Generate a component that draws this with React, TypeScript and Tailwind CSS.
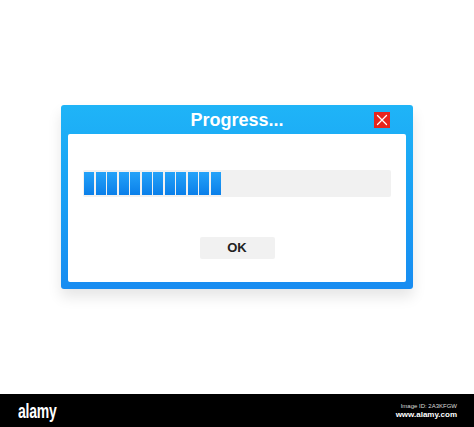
const SEGMENTS = 12;

function CloseButton() {
  return (
    <button className="absolute right-[16px] top-[7px] flex h-[16px] w-[16px] items-center justify-center bg-[#e8241c]">
      <svg width="12" height="12" viewBox="0 0 12 12" fill="none">
        <path d="M1.5 1.5 L10.5 10.5 M10.5 1.5 L1.5 10.5" stroke="white" strokeWidth="1.3" strokeLinecap="round" />
      </svg>
    </button>
  );
}

function ProgressBar({ filled }: { filled: number }) {
  return (
    <div className="mx-[15px] flex h-[27px] items-center gap-[1.5px] rounded-[2px] bg-[#f1f1f1] pl-[1px]">
      {Array.from({ length: SEGMENTS }).map((_, i) =>
        i < filled ? (
          <div
            key={i}
            className="h-[23px] w-[10px] bg-gradient-to-b from-[#24a2f9] to-[#0a7fe9]"
          />
        ) : null
      )}
    </div>
  );
}

export default function App() {
  return (
    <div className="flex h-[427px] w-[474px] flex-col bg-white font-['Liberation_Sans',Arial,sans-serif]">
      <div className="flex-1 pl-[61px] pt-[105px]">
        {/* Dialog window */}
        <div className="w-[352px] rounded-[3px] bg-gradient-to-b from-[#1fb4f7] to-[#188cf1] px-[7px] pb-[7px] shadow-[0_8px_14px_rgba(0,0,0,0.10)]">
          <div className="relative flex h-[29px] items-center justify-center">
            <span className="text-[18px] font-bold leading-none text-white">Progress...</span>
            <CloseButton />
          </div>
          <div className="h-[148px] rounded-[2px] bg-white pt-[36px]">
            <ProgressBar filled={12} />
            <div className="mt-[40px] flex justify-center">
              <button className="h-[22px] w-[75px] rounded-[2px] bg-[#f1f1f1] text-[13px] font-bold text-[#222]">
                OK
              </button>
            </div>
          </div>
        </div>
      </div>

      {/* Footer strip */}
      <div className="flex h-[33px] items-center justify-between bg-black pl-[18px] pr-[17px]">
        <span className="inline-block origin-left scale-x-[0.7] text-[20px] font-bold leading-none tracking-[-0.3px] text-white">
          alamy
        </span>
        <div className="flex flex-col items-end leading-none">
          <span className="text-[6px] text-[#ddd]">Image ID: 2A3KFGW</span>
          <span className="mt-[2px] text-[8px] font-bold text-white">www.alamy.com</span>
        </div>
      </div>
    </div>
  );
}
